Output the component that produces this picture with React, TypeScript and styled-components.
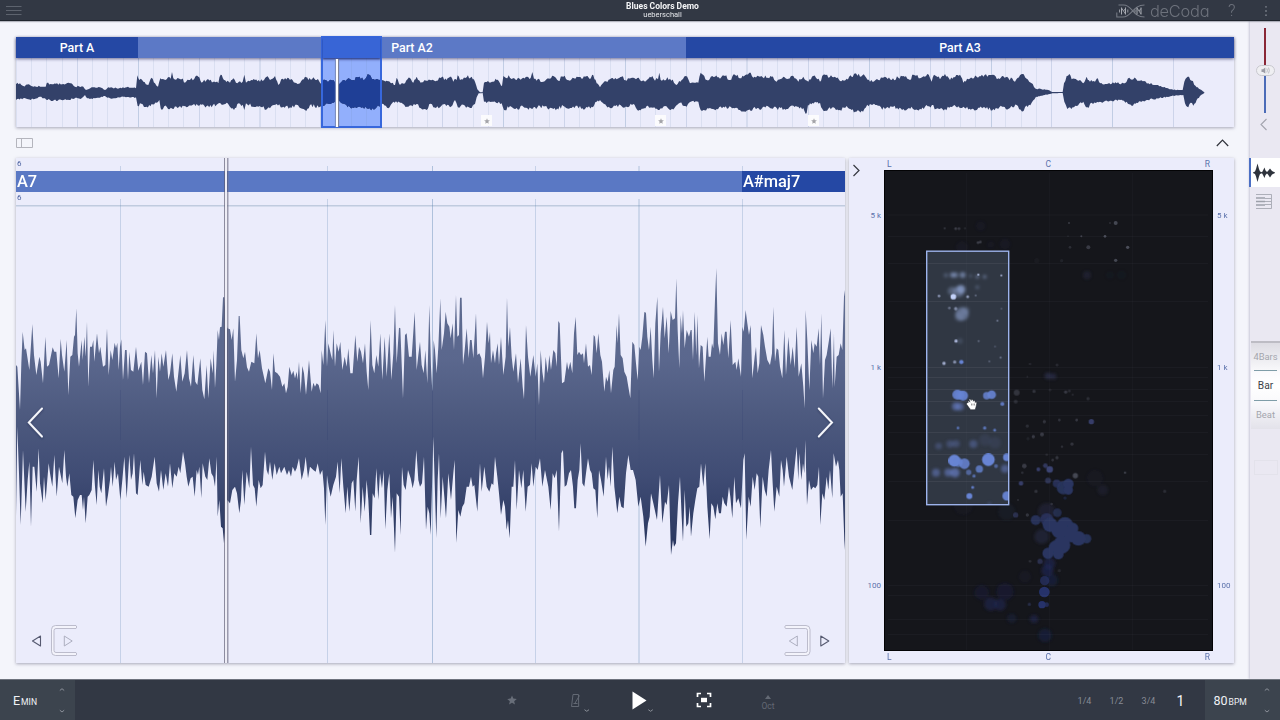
import React from 'react';
import styled, { createGlobalStyle } from 'styled-components';

const GlobalStyle = createGlobalStyle`
  *, *::before, *::after { box-sizing: border-box; }
  html, body { margin: 0; padding: 0; overflow: hidden; }
  body { font-family: Roboto, "Liberation Sans", sans-serif; background: #f4f5fb; }
  svg { display: block; }
`;

type Pair = [number, number];

/* Envelopes are flat x,y lists in thirds of a pixel. */
const pairs = (s: string, dx = 0): Pair[] =>
  s.trim().split(/\s+/).map((p) => {
    const [x, y] = p.split(',').map(Number);
    return [x + dx, y] as Pair;
  });

const mainTop: Pair[] = [
  ...pairs(`48,375 52,380 60,510 64,370 68,275 74,330 78,325 88,390 97,252 102,345 109,405 118,350 122,365 129,430 136,290 141,380 147,375 158,322 163,335 169,335 176,415 182,296 186,345 193,395 200,300 205,465 211,350 217,345 222,290 225,285 229,205 233,340 237,380 245,300 248,360 253,290 257,350 261,245 265,440 270,320 276,320 280,300 283,365 291,280 297,340 301,320 309,380 316,375 321,265 326,405 332,330 337,360 344,308 348,325 352,308 356,390 360,320 364,298 369,420 375,330 380,330 384,420 388,335 393,390 400,395 408,320 415,392 424,365 429,435 435,335 441,340 447,430 454,345 459,400 465,330 470,475 475,350 480,395 485,340 490,380 498,330 505,420 510,400 517,340 522,410 529,455 541,345 547,425 554,400 561,330 567,415 573,440 580,345 586,425 592,435 601,355 607,450 613,478 620,375 625,475 632,355 638,400 641,330 645,445 649,375 653,270 657,300 660,262 665,260 669,172 673,172 677,230 682,265 690,268 695,300 700,265 705,425 711,360 716,228 719,228 724,330 730,355 735,335 741,382 747,395 754,365 763,370 769,280 774,355 779,330 786,385 796,430 805,385 810,395 816,450 820,340 825,395 832,400 840,410 847,440 853,430 858,460 863,440 868,380 875,405 880,392 885,415 890,395 893,420 897,365 902,460 907,378 912,400 918,465 927,360 935,455 940,428 945,440 950,430 956,435 962,460 965,330 970,375 976,240 981,380 985,310 993,345 997,360 1000,270 1005,380 1010,310 1016,335 1021,305 1027,390 1034,350 1040,380 1045,325 1051,400 1058,400 1066,285 1072,365 1077,320 1083,335 1089,370 1095,310 1100,395 1105,450 1112,240 1117,375 1123,400 1129,345 1135,380 1141,280 1147,420 1154,290 1160,410 1168,280 1174,420 1180,340 1185,195 1190,370 1197,263 1201,265 1209,475 1215,285 1220,280 1227,350 1235,350 1244,215 1250,390 1255,345 1260,305 1265,375 1271,400 1276,330 1282,430`),
  ...pairs(`28,195 33,380 37,455 41,300 45,330 50,400 55,320 61,175 65,330 72,280 77,215 82,250 88,260 92,295 98,250 102,330 108,165 112,290 117,285 120,173 125,173 129,375 134,330 140,265 146,355 150,300 155,300 160,355 168,220 172,345 178,340 184,355 189,415 195,350 201,245 206,310 210,275 213,370 219,330 225,370 228,340 233,310 237,375 243,290 250,405 257,350 261,172 265,320 270,260 275,350 280,395 288,340 294,430 302,355 308,440 312,478 318,255 324,350 331,410 340,345 347,410 352,370 357,495 362,330 367,395 372,430 377,350 383,400 388,345 393,390 400,330 406,340 410,380 415,243 419,250 426,430 433,425 441,365 445,390 451,365 457,400 462,280 467,230 472,345 477,335 483,345 489,340 492,370 498,310 504,380 510,375 515,405 521,285 525,290 530,340 535,280 541,345 546,365 553,455 558,410 563,425 568,390 573,460 580,390 584,380 590,255 593,310 597,220 602,345 608,355 613,395 620,410 625,440 631,475 637,305 643,315 648,370 653,420 658,320 662,330 667,290 673,216 678,218 682,290 687,330 692,260 697,360 701,415 706,250 712,170 717,395 722,280 729,200 734,295 740,230 746,340 752,213 758,240 765,235 769,115 773,270 778,385 782,225 786,280 789,210 794,325 800,270 807,290 812,270 815,270 819,360 824,215 829,345 832,225 837,385 842,315 848,320 853,425 862,290 866,350 872,350 876,310 880,325 885,180 889,84 894,310 900,345 905,280 910,315 915,275 920,275 925,355 932,240 938,375 946,365 950,390 955,355 963,410 967,260 971,275 977,210 982,250 987,285 992,255 997,415 1004,350 1008,320 1013,400 1018,370 1023,255 1030,285 1035,320 1042,360 1050,375 1056,340 1060,200 1065,365 1070,325 1075,330 1080,380 1087,415 1093,270 1098,405 1105,290 1112,375 1118,320 1124,385 1130,260 1136,410 1144,370 1150,440 1154,505 1157,210 1162,300 1168,450 1174,300 1180,340 1184,310 1190,320 1196,265 1200,375 1204,220 1209,475 1215,360 1220,345 1227,300 1232,265 1237,445 1242,280 1244,440 1250,350 1256,345 1262,310 1267,330 1272,170 1275,150`, 1260),
];

const mainBottom: Pair[] = [
  ...pairs(`48,830 52,560 57,700 62,855 69,630 77,815 83,720 88,665 93,860 98,680 103,680 110,755 116,625 120,730 128,790 132,710 137,780 146,670 150,700 157,740 163,645 170,770 177,680 187,730 193,630 198,710 202,740 208,700 214,765 220,770 226,835 233,780 240,765 245,765 249,810 252,770 257,850 263,770 268,765 275,750 280,660 285,740 290,795 295,690 299,740 304,760 312,685 318,800 324,765 330,720 333,680 338,740 344,665 348,720 354,700 361,780 367,720 373,650 380,775 388,645 393,720 398,700 402,640 408,760 413,765 421,660 427,735 431,695 437,735 446,740 455,710 464,650 470,730 477,755 483,690 490,750 497,700 504,740 510,670 517,745 523,700 530,710 536,680 541,700 549,635 555,670 560,710 565,740 572,715 578,710 584,770 590,690 594,705 598,680 604,775 608,670 616,710 622,720 628,655 634,700 640,710 645,740 650,650 653,830 658,780 663,860 668,865 672,910 677,850 682,780 690,790 697,750 705,740 711,760 718,820 723,780 727,690 733,795 740,695 748,745 753,620 759,735 764,745 769,800 776,720 782,745 788,735 795,635 800,690 805,705 810,665 817,720 824,670 830,705 838,680 843,700 853,680 861,705 867,690 873,710 878,680 885,695 890,685 897,655 905,720 912,690 917,650 924,715 930,680 940,690 947,695 953,670 960,705 967,690 972,745 976,855 981,705 986,740 992,770 1000,735 1008,710 1013,665 1019,760 1024,655 1030,740 1037,820 1042,740 1048,815 1055,730 1060,720 1066,815 1070,720 1076,650 1082,850 1088,740 1094,815 1100,720 1105,780 1110,885 1114,885 1118,760 1124,775 1129,685 1135,780 1140,700 1146,745 1151,690 1156,868 1162,750 1168,700 1173,835 1178,770 1185,938 1190,760 1197,770 1202,885 1206,680 1211,735 1217,750 1224,690 1232,715 1238,745 1243,720 1249,630 1255,720 1260,740 1266,730 1272,650 1278,870 1283,800 1288,820`),
  ...pairs(`32,885 36,740 40,590 45,760 49,895 53,720 57,640 62,835 68,710 73,770 78,835 85,700 93,780 100,700 104,660 109,908 115,810 121,830 127,800 133,790 140,740 147,740 153,710 158,740 163,735 172,815 180,670 185,755 193,680 200,740 208,755 215,730 220,735 225,650 232,710 237,760 243,825 250,780 255,800 260,870 264,840 269,895 275,740 280,740 285,660 290,810 297,690 304,745 310,690 317,815 323,740 330,735 335,670 340,740 347,680 353,690 360,655 367,740 375,690 385,740 392,810 398,700 404,715 410,690 417,875 424,640 429,630 434,740 440,735 447,700 453,690 459,740 463,805 468,805 473,720 478,690 482,610 487,730 493,740 498,700 504,655 510,690 515,700 520,745 526,750 532,835 537,690 543,720 551,770 558,650 563,720 567,680 572,740 577,620 583,740 592,820 598,770 604,800 611,805 618,700 625,645 632,690 639,690 647,720 655,800 662,770 670,830 677,920 684,850 689,830 693,760 700,790 711,840 720,705 727,850 735,785 740,795 747,735 753,945 759,900 762,920 768,910 774,790 780,710 785,830 789,905 794,750 799,860 805,850 809,800 813,890 820,820 826,780 832,745 838,740 843,670 850,740 856,670 862,800 869,898 874,790 880,800 886,838 892,790 897,820 903,820 908,770 913,790 920,800 927,740 931,770 937,835 943,710 948,790 955,775 963,805 970,660 974,640 979,900 986,770 992,800 998,710 1004,750 1010,700 1015,710 1021,865 1028,710 1034,750 1040,770 1046,690 1053,630 1058,730 1063,815 1070,740 1078,770 1083,660 1088,690 1092,740 1100,650 1107,710 1117,750 1123,690 1130,620 1135,720 1138,640 1144,720 1149,670 1153,700 1156,600 1161,795 1167,720 1173,750 1180,740 1186,745 1192,735 1197,680 1201,855 1207,760 1213,780 1220,710 1225,750 1230,690 1237,775 1241,640 1248,680 1254,660 1258,690 1262,770 1268,760 1273,900 1275,930`, 1260),
];

const overTop: Pair[] = [
  ...pairs(`48,253 60,250 70,258 90,255 100,260 137,260 140,250 160,253 190,252 210,250 225,260 250,260 258,270 275,262 300,262 315,270 325,262 350,265 380,262 408,265 412,226 418,240 430,245 445,255 455,233 465,250 474,260 481,235 500,238 512,236 516,216 520,235 545,238 555,248 570,240 595,230 605,248 620,240 640,245 655,250 662,224 672,240 690,248 700,235 712,250 728,245 733,224 738,248 765,240 780,245 800,230 810,240 825,228 835,255 848,236 870,240 885,248 900,250 915,230 925,240 940,232 950,240 965,250 975,240 985,245 1000,240 1010,262 1020,250 1045,235 1060,240 1075,232 1090,240 1100,230 1110,225 1116,238 1125,240 1145,240 1160,242 1175,250 1185,255 1190,233 1200,255 1215,250 1230,234 1240,248 1250,230 1262,248 1280,242`),
  ...pairs(`30,240 50,242 65,232 80,240 90,230 100,245 110,240 113,226 120,240 140,232 155,230 165,245 172,268 180,277 188,277 192,248 220,245 230,240 240,250 246,258 250,228 270,233 290,240 310,233 332,234 337,216 342,236 370,245 390,236 400,228 415,242 430,230 450,242 470,230 485,236 495,230 510,238 520,226 530,250 540,262 550,248 570,238 590,238 605,230 620,242 640,233 660,240 675,245 697,228 705,242 714,238 718,218 722,240 750,236 770,255 785,240 797,228 810,250 835,248 842,218 860,240 885,230 900,236 915,228 930,240 945,224 960,235 975,226 988,218 1000,233 1020,230 1040,234 1055,230 1070,245 1090,230 1105,236 1120,228 1135,245 1150,230 1165,245 1180,228 1200,245 1210,224 1225,233 1245,230 1260,243 1280,236`, 1260),
  ...pairs(`5,230 15,220 30,230 45,228 60,245 85,240 105,230 125,240 145,233 160,228 180,240 190,224 210,235 232,222 245,245 252,224 270,238 285,222 300,240 330,224 340,248 355,238 380,230 400,230 420,225 445,235 475,234 495,245 510,226 517,222 530,236 545,250 555,265 575,268 595,270 607,276 638,276 642,250 650,228 658,222 665,238 690,240 700,250 710,230 720,245 735,245 740,236 750,250 770,252 800,250 825,250 838,233 850,238 870,242 895,250 920,255 940,262 970,270 998,270 1003,245 1013,230 1025,242 1040,262 1050,268 1063,277`, 2550),
];

const overBottom: Pair[] = [
  ...pairs(`48,300 70,295 100,298 120,290 150,300 200,300 230,293 245,295 255,285 262,295 300,293 315,288 330,295 370,290 408,292 413,318 420,310 440,320 455,312 470,308 478,300 482,325 500,320 517,326 540,318 560,322 590,312 620,318 650,314 680,308 702,330 712,312 728,314 733,330 738,310 775,320 810,325 830,312 850,320 870,322 890,314 915,330 930,315 960,320 980,310 1005,305 1012,290 1020,305 1050,322 1080,320 1105,326 1130,322 1150,312 1165,325 1180,305 1200,308 1225,320 1250,312 1275,327`),
  ...pairs(`20,330 28,312 60,322 75,312 90,322 105,300 113,320 130,314 155,324 165,312 170,292 176,280 188,279 192,305 220,305 245,310 252,330 270,318 290,324 310,320 337,327 360,318 390,323 400,327 430,318 455,324 480,318 495,327 515,320 530,305 540,300 552,312 570,324 590,315 620,320 640,312 658,330 680,318 718,330 735,318 752,330 780,308 800,320 812,305 835,305 842,330 870,324 890,327 910,320 940,324 960,330 985,330 1000,324 1020,330 1040,317 1070,324 1100,327 1120,317 1150,324 1160,340 1164,315 1170,310 1185,305 1200,308 1210,332 1240,322 1260,330 1280,318`, 1260),
  ...pairs(`5,330 15,335 35,332 60,312 80,315 105,327 130,320 160,327 185,320 195,330 225,320 250,315 258,327 285,327 310,317 340,320 370,327 400,322 430,327 460,320 480,324 500,315 515,334 525,322 545,308 558,290 580,286 607,280 638,279 643,305 652,327 660,322 680,318 700,305 712,322 725,308 750,305 780,302 810,300 830,305 845,317 860,308 890,300 920,295 950,290 980,286 1000,285 1005,310 1015,322 1022,308 1030,317 1040,300 1050,288 1063,279`, 2550),
];

/* Fills in fine peaks between the envelope's control points. */
const roughen = (pts: Pair[], dir: number): Pair[] => {
  const out: Pair[] = [];
  let seed = 17 + dir;
  for (let i = 0; i < pts.length - 1; i++) {
    const [x0, y0] = pts[i];
    const [x1, y1] = pts[i + 1];
    const n = Math.max(1, Math.round((x1 - x0) / 4));
    for (let k = 0; k < n; k++) {
      const t = k / n;
      const y = y0 + (y1 - y0) * t;
      seed = (seed * 1103515245 + 12345) % 2147483648;
      const amp = Math.min(11, Math.abs(y - 278) * 0.26);
      out.push([x0 + (x1 - x0) * t, k === 0 ? y : y + dir * (seed / 2147483648 - 0.4) * amp]);
    }
  }
  out.push(pts[pts.length - 1]);
  return out;
};

const toPath = (top: Pair[], bottom: Pair[]) =>
  'M' + top.map((p) => p.join(' ')).join('L') + 'L' + [...bottom].reverse().map((p) => p.join(' ')).join('L') + 'Z';

const MAIN_WAVE = toPath(mainTop, mainBottom);
const OVER_WAVE = toPath(roughen(overTop, -1), roughen(overBottom, 1));

/* ---------- frame ---------- */
const Frame = styled.div`
  width: 1280px;
  height: 720px;
  display: flex;
  flex-direction: column;
  overflow: hidden;
  background: #f4f5fb;
`;

const Header = styled.header`
  height: 21px;
  flex: none;
  display: grid;
  grid-template-columns: 562.5px 200px 1fr;
  background: #323844;
  border-bottom: 1px solid #20252d;
  box-shadow: 0 1px 1px rgba(60, 66, 80, 0.35);
  z-index: 1;
`;

const MenuSlot = styled.div`
  padding: 6px 0 0 6px;
`;

const Titles = styled.div`
  text-align: center;
  color: #f4f5f7;
  padding-top: 2px;
`;

const SongTitle = styled.div`
  font-size: 8.5px;
  font-weight: 700;
  line-height: 9px;
`;

const Artist = styled.div`
  font-size: 7.5px;
  line-height: 8px;
  color: #e4e6ea;
`;

const Brand = styled.div`
  display: flex;
  align-items: center;
  padding-left: 353.5px;
  color: #6d727c;
`;

const BrandName = styled.span`
  width: 60px;
  margin-left: 4px;
  font-family: Inter, sans-serif;
  font-size: 16.4px;
  font-weight: 300;
  line-height: 20px;
  letter-spacing: -0.25px;
  font-feature-settings: "cv11";
`;

const Help = styled.span`
  width: 10px;
  margin: 1px 0 0 18px;
  font-size: 16.5px;
  font-weight: 300;
  line-height: 20px;
`;

const MoreDots = styled.svg`
  margin-left: 26px;
`;

const Body = styled.div`
  flex: 1;
  display: flex;
  min-height: 0;
`;

const Content = styled.main`
  width: 1250px;
  padding: 16px 16px 15px 16px;
  display: flex;
  flex-direction: column;
`;

/* ---------- overview ---------- */
const Overview = styled.section`
  position: relative;
  width: 1218px;
  height: 90px;
  flex: none;
  background: #ebecfb;
  box-shadow: 0 1px 3px rgba(90, 90, 120, 0.5);
`;

const PartRow = styled.div`
  position: relative;
  display: flex;
  height: 21px;
  box-shadow: 0 1px 3px rgba(40, 40, 90, 0.65);
`;

const Part = styled.div<{ $w: number; $dark?: boolean }>`
  width: ${(p) => p.$w}px;
  background: ${(p) => (p.$dark ? '#2548a4' : '#5c79c6')};
  color: #fff;
  font-size: 12.4px;
  font-weight: 500;
  line-height: 21px;
  text-align: center;
`;

const OverviewWave = styled.svg`
  position: absolute;
  left: 0;
  top: 21px;
  z-index: 0;
`;

const Selection = styled.div`
  position: absolute;
  left: 305px;
  top: -1px;
  width: 61px;
  height: 92px;
  border: 2px solid #3767dc;
`;

const SelectionHead = styled.div`
  height: 20px;
  background: #3865d6;
  box-shadow: 0 1px 2px rgba(20, 40, 120, 0.7);
`;

const OverviewPlayhead = styled.div`
  position: absolute;
  left: 320px;
  top: 22px;
  width: 2px;
  height: 68px;
  background: #fff;
  box-shadow: 1px 0 1px #7d7f8f, -1px 0 1px #7d8cb8;
`;

const Marker = styled.div<{ $x: number }>`
  position: absolute;
  left: ${(p) => p.$x}px;
  top: 78px;
  width: 11px;
  height: 11px;
  background: #fbfbfd;
  display: flex;
  align-items: center;
  justify-content: center;
`;

const Tools = styled.div`
  height: 31px;
  flex: none;
  display: flex;
  align-items: center;
  justify-content: space-between;
  padding: 1px 5px 0 0;
`;

/* ---------- detail ---------- */
const Panels = styled.div`
  display: flex;
  gap: 4px;
  height: 505px;
`;

const Track = styled.section`
  position: relative;
  width: 829px;
  background: #ebecfb;
  box-shadow: 0 1px 3px rgba(90, 90, 120, 0.5);
  display: flex;
  flex-direction: column;
`;

const Ruler = styled.div`
  height: 13px;
  padding-left: 1px;
  font-size: 8px;
  line-height: 12px;
  color: #4b62a0;
`;

const ChordRow = styled.div`
  display: flex;
  height: 21px;
  flex: none;
`;

const Chord = styled.div<{ $w: number; $dark?: boolean }>`
  width: ${(p) => p.$w}px;
  padding-left: 1px;
  background: ${(p) => (p.$dark ? '#2548a4' : '#5a78c4')};
  color: #fff;
  font-size: 16.4px;
  font-weight: 500;
  line-height: 22px;
`;

const TrackOverlay = styled.svg`
  position: absolute;
  left: 0;
  top: 0;
`;

const Playhead = styled.div`
  position: absolute;
  left: 208px;
  top: 0;
  width: 5px;
  height: 505px;
  background: linear-gradient(90deg, rgba(90, 88, 110, 0.65) 0 1px, #eeedf6 1px 3px, rgba(90, 88, 110, 0.55) 3px 4px, rgba(120, 118, 140, 0.35) 4px 5px);
`;

const Spectral = styled.section`
  width: 385px;
  background: #ebecfb;
  box-shadow: 0 1px 3px rgba(90, 90, 120, 0.5);
  display: grid;
  grid-template-columns: 35px 329px 21px;
  grid-template-rows: 12px 481px 12px;
`;

const PanAxis = styled.div`
  display: flex;
  justify-content: space-between;
  padding: 0 3px;
  font-size: 8.5px;
  line-height: 12px;
  color: #5b71ab;
`;

const FreqAxis = styled.div<{ $right?: boolean }>`
  display: flex;
  flex-direction: column;
  padding-top: 39.5px;
  font-size: 8px;
  line-height: 12px;
  color: #5b71ab;
  text-align: ${(p) => (p.$right ? 'left' : 'right')};
  padding-left: ${(p) => (p.$right ? 4 : 0)}px;
  padding-right: ${(p) => (p.$right ? 0 : 3)}px;
  white-space: nowrap;
`;

const Freq = styled.span<{ $gap?: number }>`
  margin-top: ${(p) => p.$gap ?? 0}px;
`;

const Collapse = styled.div`
  padding: 6px 0 0 3px;
  height: 0;
`;

/* ---------- rail ---------- */
const Rail = styled.aside`
  width: 30px;
  background: #eae8f2;
  box-shadow: -1px 0 2px rgba(120, 115, 150, 0.35);
  display: flex;
  flex-direction: column;
  align-items: center;
`;

const Volume = styled.div`
  width: 30px;
  height: 137px;
  flex: none;
`;

const RailTab = styled.div<{ $active?: boolean }>`
  width: 31px;
  height: 29px;
  flex: none;
  margin-left: -1px;
  padding-right: 3px;
  display: flex;
  align-items: center;
  justify-content: center;
  background: ${(p) => (p.$active ? '#fff' : 'transparent')};
  border-left: 2px solid ${(p) => (p.$active ? '#4b6fc4' : 'transparent')};
`;

const ScaleWheel = styled.div`
  width: 29px;
  height: 88px;
  margin: 125px 0 0 1px;
  flex: none;
  display: flex;
  flex-direction: column;
  align-items: center;
  border-top: 2px solid #bdbcc4;
  background: linear-gradient(#dddce3, #fbfbfd 35%, #fff 50%, #f8f8fb 70%, #e3e2ea);
`;

const ScaleItem = styled.div<{ $on?: boolean }>`
  width: 23px;
  height: ${(p) => (p.$on ? 31 : 27)}px;
  flex: none;
  display: flex;
  align-items: center;
  justify-content: center;
  font-size: ${(p) => (p.$on ? 10.2 : 9.4)}px;
  color: ${(p) => (p.$on ? '#3b3f48' : '#a4a6ad')};
  border-style: solid;
  border-color: #7f9da8;
  border-width: ${(p) => (p.$on ? '1px 0' : '0')};
`;

const Ghost = styled.div`
  width: 24px;
  height: 15px;
  margin: 31px 0 0 2px;
  border: 1px solid #e3e2eb;
`;

/* ---------- footer ---------- */
const Footer = styled.footer`
  height: 41px;
  flex: none;
  display: flex;
  background: #323844;
  border-top: 1px solid #6e737d;
`;

const ValueBox = styled.div`
  width: 75px;
  display: flex;
  justify-content: space-between;
  background: #3c444e;
  padding-right: 10.5px;
`;

const Value = styled.div<{ $x: number }>`
  padding-left: ${(p) => p.$x}px;
  font-size: 12.5px;
  line-height: 42px;
  color: #f0f2f5;
  white-space: nowrap;
`;

const Unit = styled.span`
  font-size: 8.6px;
  margin-left: 1px;
`;

const Transport = styled.div`
  display: flex;
  width: 320px;
  margin-left: 405px;
`;

const Control = styled.div`
  width: 64px;
  display: flex;
  align-items: center;
  justify-content: center;
  color: #636974;
`;

const Octave = styled.div`
  display: flex;
  flex-direction: column;
  align-items: center;
  gap: 2px;
  font-size: 8.5px;
  line-height: 10px;
  padding-top: 5px;
`;

const Speeds = styled.div`
  display: flex;
  margin-left: auto;
  margin-right: 8.5px;
`;

const Speed = styled.div<{ $on?: boolean }>`
  width: 32px;
  text-align: center;
  font-size: ${(p) => (p.$on ? 14 : 9)}px;
  line-height: 42px;
  color: ${(p) => (p.$on ? '#f4f5f8' : '#878c96')};
`;

const StarShape = ({ size, color }: { size: number; color: string }) => (
  <svg width={size} height={size} viewBox="0 0 24 24">
    <path fill={color} d="M12 1l3.2 7.6 8.3.7-6.3 5.4 1.9 8.1L12 18.5l-7.1 4.3 1.9-8.1L.5 9.3l8.3-.7z" />
  </svg>
);

const Steppers = () => (
  <svg width="6" height="40" viewBox="0 0 6 40" fill="none" stroke="#8b9099" strokeWidth="1">
    <path d="M.8 10.5 3 8.7l2.2 1.8M.8 30.2 3 32l2.2-1.8" />
  </svg>
);

const Logo = () => (
  <svg width="30" height="14" viewBox="0 0 30 14" fill="none" stroke="#757a84" strokeWidth="1.1">
    <path d="M.8 8.5v4.500h6C16 13 16.500 1 28.500 1M2.500 1h5C17 1 16 13 28.500 13" />
    <path stroke="#a9adb4" strokeWidth="1" d="M5.500 3.500v7M9.500 3.500v7M21 3.500v7M25 3.500v7" />
    <path stroke="#a0a4ab" strokeWidth=".9" d="M5.500 4l4 6M9.500 4.500 7.500 7M21 4l4 6M25 4.500 23 7M3.500 5.500v3M11.800 5.500v3M19 5.500v3" />
  </svg>
);

const bars = [61.5, 122.5, 183.5, 244, 304.5, 365.5, 426.5, 487.5, 548.5, 609.5, 670.5, 731, 792.5, 853.5, 914.5, 975.5, 1035.5, 1096.5, 1157.5];
const beats = Array.from({ length: 68 }, (_, i) => 0.5 + Math.round(i * 15.22)).filter((_, i) => i % 4 !== 0 || i === 0);

const OverviewGraph = () => (
  <OverviewWave width="1218" height="69" viewBox="16 58 1218 69">
    <defs>
      <clipPath id="sel"><rect x="321" y="58" width="61" height="69" /></clipPath>
    </defs>
    <rect x="321" y="58" width="61" height="69" fill="#92affc" />
    <g stroke="#6b8cb4">
      {beats.map((x) => <line key={x} x1={x + 16} x2={x + 16} y1="58" y2="127" strokeOpacity=".13" />)}
      {bars.map((x, i) => <line key={x} x1={x + 16} x2={x + 16} y1="58" y2="127" strokeOpacity={i % 2 ? 0.32 : 0.24} />)}
    </g>
    <path d={OVER_WAVE} transform="scale(.33333)" fill="#334169" />
    <g clipPath="url(#sel)">
      <path d={OVER_WAVE} transform="scale(.33333)" fill="#1f3f96" />
    </g>
  </OverviewWave>
);

const TrackGraph = () => (
  <TrackOverlay width="829" height="505" viewBox="16 158 829 505">
    <defs>
      <linearGradient id="wave" gradientUnits="userSpaceOnUse" x1="0" x2="0" y1="60" y2="960">
        <stop offset="0" stopColor="#5b698e" />
        <stop offset=".33" stopColor="#56638a" />
        <stop offset=".52" stopColor="#48557b" />
        <stop offset=".72" stopColor="#3a4770" />
        <stop offset="1" stopColor="#1e2c56" />
      </linearGradient>
      <filter id="arrowShadow" x="-50%" y="-50%" width="200%" height="200%">
        <feDropShadow dx="0" dy="1" stdDeviation="0.8" floodColor="#1d2746" floodOpacity=".6" />
      </filter>
    </defs>
    <rect x="16" y="205" width="829" height="1.5" fill="#c0cbdf" />
    {[120.5, 327.5, 432.5, 535.5, 639, 742.5].map((x, i) => (
      <g key={x} stroke="#4f7cab" strokeOpacity={i === 2 ? 0.38 : 0.24} strokeWidth={i === 4 ? 1.6 : 1}>
        <line x1={x} x2={x} y1="166" y2="171" />
        <line x1={x} x2={x} y1="199" y2="663" />
      </g>
    ))}
    <path d={MAIN_WAVE} fill="url(#wave)" fillOpacity=".97" transform="translate(0 240) scale(.33333)" />
    <g stroke="#24356b" strokeOpacity=".14">
      {[120.5, 327.5, 432.5, 535.5, 639, 742.5].map((x) => <line key={x} x1={x} x2={x} y1="390" y2="440" />)}
    </g>
    <g fill="none" stroke="#f6f7fc" strokeWidth="1.9" strokeLinecap="round" filter="url(#arrowShadow)">
      <path d="M42 408.500 28.800 422.500 42 436.500" />
      <path d="M818.800 408.500 832 422.500 818.800 436.500" />
    </g>
    <g fill="none" strokeLinejoin="round">
      <path d="M40.500 636 32.500 641 40.500 646Z" stroke="#565a70" strokeWidth="1.1" />
      <path d="M820.800 636 828.800 641 820.800 646Z" stroke="#565a70" strokeWidth="1.1" />
      <path d="M64.300 636 72.200 641 64.300 646Z" stroke="#adafc0" />
      <path d="M797.300 636 789.300 641 797.300 646Z" stroke="#adafc0" />
      <path d="M76 625.500H55.500a4 4 0 0 0-4 4v22a4 4 0 0 0 4 4H76q1.500-1.500 0-3H56a2 2 0 0 1-2-2v-20a2 2 0 0 1 2-2H76q1.500-1.500 0-3Z" fill="#f3f3fb" stroke="#b5b6c6" strokeWidth=".9" />
      <path d="M785.500 625.500H806a4 4 0 0 1 4 4v22a4 4 0 0 1-4 4H785.500q-1.500-1.500 0-3H805.500a2 2 0 0 0 2-2v-20a2 2 0 0 0-2-2H785.500q-1.500-1.500 0-3Z" fill="#f3f3fb" stroke="#b5b6c6" strokeWidth=".9" />
    </g>
  </TrackOverlay>
);

/* x, y, r, opacity */
type Dot = [number, number, number, number];

const outside: Dot[] = [
  [284, 85, 3, 0.3], [317, 86, 4, 0.35], [327, 86, 4, 0.3], [345, 85, 3, 0.2], [384, 128, 4, 0.35], [391, 126, 4, 0.35],
  [657, 69, 3, 0.3], [780, 69, 3, 0.2], [797, 69, 6, 0.4], [694, 109, 3, 0.35], [765, 109, 4, 0.45], [654, 109, 3, 0.1],
  [660, 142, 4, 0.2], [715, 142, 6, 0.3], [833, 142, 5, 0.45], [797, 181, 5, 0.4], [635, 182, 5, 0.1], [560, 182, 8, 0.05],
  [540, 492, 4, 0.15], [621, 495, 4, 0.2], [532, 530, 2, 0.3], [500, 578, 9, 0.25], [497, 605, 6, 0.2], [552, 574, 5, 0.25],
  [600, 570, 4, 0.15], [647, 576, 5, 0.3], [658, 573, 4, 0.2], [668, 584, 3, 0.2], [714, 596, 5, 0.2],
  [583, 665, 5, 0.25], [628, 660, 4, 0.25], [680, 660, 4, 0.3], [532, 678, 5, 0.2], [550, 710, 5, 0.3],
  [576, 703, 6, 0.3], [534, 716, 5, 0.1], [666, 732, 5, 0.25], [636, 740, 4, 0.2], [590, 764, 4, 0.15], [621, 773, 5, 0.25],
  [608, 780, 4, 0.25], [523, 798, 7, 0.3], [517, 818, 4, 0.2], [825, 818, 3, 0.5], [944, 874, 5, 0.2], [676, 827, 8, 0.4],
  [558, 874, 5, 0.25], [504, 900, 3, 0.2], [532, 945, 5, 0.25], [605, 912, 4, 0.2], [540, 1084, 4, 0.2], [628, 1112, 5, 0.15],
];

const outsideBlue: Dot[] = [
  [724, 665, 8, 0.7], [565, 808, 6, 0.7], [586, 797, 7, 0.6], [599, 808, 10, 0.8], [513, 850, 7, 0.7], [594, 842, 9, 0.5],
  [497, 945, 8, 0.45], [570, 1084, 8, 0.45], [538, 1213, 5, 0.4],
];

const clusters: Dot[] = [
  [620, 850, 12, 0.8], [640, 863, 20, 0.9], [655, 852, 16, 1], [655, 870, 14, 1], [645, 894, 5, 0.5],
  [557, 960, 15, 0.85], [590, 958, 19, 0.8], [622, 938, 13, 0.7], [600, 974, 22, 1], [645, 975, 24, 1], [630, 990, 26, 1], [668, 985, 17, 1],
  [664, 1005, 22, 1], [685, 1015, 22, 1], [710, 1016, 14, 0.9], [635, 1035, 26, 1], [618, 1043, 22, 1], [594, 1060, 17, 1],
  [625, 1062, 16, 1],
];

const softDark: Dot[] = [
  [392, 78, 14, 0.1], [336, 142, 18, 0.1], [422, 134, 10, 0.1], [465, 132, 16, 0.1], [711, 225, 12, 0.25], [780, 225, 12, 0.06], [815, 225, 14, 0.06],
  [594, 528, 10, 0.45], [610, 529, 9, 0.4], [400, 536, 12, 0.06], [758, 870, 16, 0.18], [735, 835, 25, 0.08], [590, 935, 26, 0.25],
  [575, 1010, 22, 0.3], [525, 1130, 18, 0.1], [340, 915, 30, 0.08], [470, 935, 26, 0.12],
];

const softNavy: Dot[] = [
  [598, 1090, 18, 0.55], [592, 1112, 18, 0.6], [605, 1140, 18, 0.4], [395, 1178, 22, 0.25], [465, 1175, 26, 0.28],
  [422, 1212, 20, 0.5], [450, 1214, 18, 0.5], [485, 1255, 14, 0.3], [552, 1257, 13, 0.5], [585, 1306, 20, 0.4],
];

const inside: Dot[] = [
  [175, 104, 3, 1], [244, 106, 3, 0.9], [57, 168, 4, 0.65], [143, 170, 4.5, 0.65], [167, 166, 3, 0.4],
  [88, 204, 4, 0.4], [107, 206, 5, 0.55], [232, 242, 3, 0.5], [244, 206, 3, 0.25], [108, 303, 5, 0.85], [176, 303, 3, 0.4],
  [72, 370, 5, 0.8], [104, 366, 5, 0.6], [208, 364, 2.5, 0.5], [242, 353, 3, 0.5], [225, 320, 3, 0.25],
];

const insideBlue: Dot[] = [
  [124, 366, 6.5, 1], [112, 464, 15, 0.9], [129, 467, 15, 0.9], [120, 465, 14, 0.7], [200, 467, 11, 0.85], [215, 464, 13, 0.9],
  [247, 492, 6, 0.85], [114, 564, 4, 0.8], [194, 564, 5, 0.8], [224, 570, 4.5, 0.8],
  [103, 662, 18, 1], [115, 667, 14, 0.7], [133, 671, 16, 0.85], [205, 659, 19, 1], [260, 652, 11, 1], [178, 687, 11, 0.8], [228, 678, 6, 0.6],
  [146, 697, 8, 0.6], [162, 708, 5, 0.7], [158, 742, 4.5, 0.9], [148, 768, 9, 1], [261, 768, 14, 0.95],
];

const insideSoft: Dot[] = [
  [78, 106, 7, 0.3], [98, 105, 8, 0.6], [107, 105, 8, 0.5], [128, 105, 9, 0.6], [152, 108, 5, 0.3], [172, 110, 6, 0.45], [194, 110, 6, 0.45],
  [96, 153, 13, 0.35], [115, 155, 17, 0.4], [123, 148, 13, 0.75], [172, 142, 6, 0.3], [126, 222, 20, 0.5], [118, 230, 14, 0.25], [136, 212, 12, 0.25],
  [120, 303, 8, 0.2],
];

const insideSoftBlue: Dot[] = [
  [56, 618, 10, 0.3], [90, 612, 11, 0.3], [108, 611, 11, 0.3], [160, 612, 12, 0.38], [195, 600, 18, 0.1], [225, 608, 18, 0.1],
  [48, 698, 12, 0.5], [85, 697, 12, 0.55], [105, 698, 14, 0.65], [255, 686, 12, 0.5], [208, 792, 5, 0.4],
  [108, 499, 12, 0.6], [120, 500, 12, 0.5],
];

const drawDots = (list: Dot[]) => list.map(([x, y, r, o]) => <circle key={`${x}-${y}`} cx={x} cy={y} r={r} opacity={o} />);

const rows = [215, 236.5, 263.5, 301.5, 367.5, 377.5, 389.5, 401.5, 415.5, 432.5, 454.5, 481.5, 520.5, 585.5, 595.5, 619.5, 634.5];

const Spectrum = () => (
  <svg width="329" height="481" viewBox="884 170 329 481">
    <defs>
      <filter id="soft" x="-100%" y="-100%" width="300%" height="300%"><feGaussianBlur stdDeviation="5.5" /></filter>
      <filter id="slight" x="-20%" y="-20%" width="140%" height="140%"><feGaussianBlur stdDeviation="1.3" /></filter>
      <clipPath id="region"><rect x="927" y="251" width="82" height="253.5" /></clipPath>
    </defs>
    <rect x="884" y="170" width="329" height="481" fill="#030305" />
    <rect x="885" y="171" width="327" height="479" fill="#15161b" />
    <g transform="translate(850 200) scale(.33333)">
      <g fill="#3a3f6e" filter="url(#soft)">{drawDots(softDark)}</g>
      <g fill="#1f295c" filter="url(#soft)">{drawDots(softNavy)}</g>
      <g fill="#8c90a4" filter="url(#slight)">{drawDots(outside)}</g>
      <g fill="#46508a" filter="url(#slight)">{drawDots(outsideBlue)}</g>
      <g fill="#2a3661" filter="url(#slight)">{drawDots(clusters)}</g>
      <g fill="#26326a" filter="url(#slight)">
        <circle cx="584" cy="1142" r="14" opacity=".7" /><circle cx="583" cy="1176" r="16" /><circle cx="576" cy="1214" r="11" /><circle cx="590" cy="1214" r="7" opacity=".7" />
      </g>
    </g>
    <rect x="927" y="251.5" width="82" height="253" fill="#303743" />
    <g stroke="#8f98a8" strokeOpacity=".055">
      {rows.map((y) => <line key={y} x1="888" x2="1208" y1={y} y2={y} />)}
      {[966.5, 1049.5, 1132.5].map((x) => <line key={x} x1={x} x2={x} y1="173" y2="650" strokeOpacity=".035" />)}
    </g>
    <g clipPath="url(#region)">
      <g stroke="#9aa5ad" strokeOpacity=".07">
        {rows.map((y) => <line key={y} x1="928" x2="1008" y1={y} y2={y} />)}
      </g>
      <g transform="translate(920 240) scale(.33333)">
        <g fill="#8ea2cf" filter="url(#soft)">{drawDots(insideSoft)}</g>
        <g fill="#6c84d0" filter="url(#soft)">{drawDots(insideSoftBlue)}</g>
        <g fill="#bcc8ee" filter="url(#slight)">{drawDots(inside)}<circle cx="100" cy="170" r="8.5" fill="#c3d2fa" /></g>
        <g fill="#6784d4" filter="url(#slight)">{drawDots(insideBlue)}</g>
      </g>
    </g>
    <rect x="926.7" y="251.2" width="82" height="253.5" fill="none" stroke="#9db3ec" strokeWidth="1.4" />
    <path
      d="M968.300 402.500c-.9-1.300.4-2 1.200-1l.5.700-.8-2.200c-.2-1.100 1.100-1.400 1.600-.3l.4.900c-.1-1.500 1.800-1.600 2-.1l.1.800c.5-1.300 1.900-.9 1.800.3v1c.8-1 1.800-.3 1.600.9l-.6 3c-.2 1.400-.8 2-1 3.200h-4.800c-.3-1.400-1-1.600-1.700-2.600l-1.900-2.700c-.5-.9.700-2.300 1.600-1.900z"
      fill="#fff" stroke="#23262e" strokeWidth=".5"
    />
    <path d="M971.500 403.500v2M973 403.500v2M974.500 403.500v2" stroke="#444" strokeWidth=".5" />
  </svg>
);

export default function App() {
  return (
    <Frame>
      <GlobalStyle />
      <Header>
        <MenuSlot>
          <svg width="16" height="9" viewBox="0 0 16 9" stroke="#5d636e"><path d="M0 .5h15.500M0 4.500h15.500M0 8.500h15.500" /></svg>
        </MenuSlot>
        <Titles>
          <SongTitle>Blues Colors Demo</SongTitle>
          <Artist>ueberschall</Artist>
        </Titles>
        <Brand>
          <Logo />
          <BrandName>deCoda</BrandName>
          <Help>?</Help>
          <MoreDots width="4" height="12" viewBox="0 0 4 12" fill="#777c86">
            <circle cx="2" cy="1.8" r=".9" /><circle cx="2" cy="6" r=".9" /><circle cx="2" cy="10.2" r=".9" />
          </MoreDots>
        </Brand>
      </Header>

      <Body>
        <Content>
          <Overview>
            <OverviewGraph />
            <PartRow>
              <Part $w={122} $dark>Part A</Part>
              <Part $w={548}>Part A2</Part>
              <Part $w={548} $dark>Part A3</Part>
            </PartRow>
            <Selection><SelectionHead /></Selection>
            <OverviewPlayhead />
            {[465, 639, 792].map((x) => (
              <Marker key={x} $x={x}><StarShape size={6} color="#a3a3a8" /></Marker>
            ))}
          </Overview>

          <Tools>
            <svg width="17" height="10" viewBox="0 0 17 10" fill="none" stroke="#b4b5bd"><path d="M.5.5h16v9H.5zM5.500.5v9" /></svg>
            <svg width="13" height="8" viewBox="0 0 13 8" fill="none" stroke="#2f323a" strokeWidth="1.2"><path d="M.8 7 6.500 1.200 12.200 7" /></svg>
          </Tools>

          <Panels>
            <Track>
              <Ruler>6</Ruler>
              <ChordRow>
                <Chord $w={726}>A7</Chord>
                <Chord $w={103} $dark>A#maj7</Chord>
              </ChordRow>
              <Ruler>6</Ruler>
              <TrackGraph />
              <Playhead />
            </Track>
            <Spectral>
              <Collapse>
                <svg width="9" height="13" viewBox="0 0 9 13" fill="none" stroke="#363940" strokeWidth="1.2"><path d="M1.500 1 7 6.500 1.500 12" /></svg>
              </Collapse>
              <PanAxis><span>L</span><span>C</span><span>R</span></PanAxis>
              <span />
              <FreqAxis><Freq>5 k</Freq><Freq $gap={140}>1 k</Freq><Freq $gap={206}>100</Freq></FreqAxis>
              <Spectrum />
              <FreqAxis $right><Freq>5 k</Freq><Freq $gap={140}>1 k</Freq><Freq $gap={206}>100</Freq></FreqAxis>
              <span />
              <PanAxis><span>L</span><span>C</span><span>R</span></PanAxis>
              <span />
            </Spectral>
          </Panels>
        </Content>

        <Rail>
          <Volume>
            <svg width="30" height="137" viewBox="1250 21 30 137" fill="none">
              <path d="M1265 28v42" stroke="#8a2736" strokeWidth="2" />
              <path d="M1265 70v43" stroke="#4c6cb8" strokeWidth="2" />
              <rect x="1256.5" y="65.5" width="18" height="10" rx="5" fill="#efeff2" stroke="#c9c9cf" />
              <path d="M1261.500 69.300h1.500l2.300-1.700v6l-2.300-1.700h-1.500z" fill="#9d9da6" />
              <path d="M1266.800 68.500q1.200 2 0 4M1268.500 67.600q1.700 3 0 5.800" stroke="#b0b0b8" strokeWidth=".8" />
              <path d="M1266.500 119 1261 124.500 1266.500 130" stroke="#a3a4ae" strokeWidth="1.1" />
            </svg>
          </Volume>
          <RailTab $active>
            <svg width="22" height="20" viewBox="0 0 22 20" fill="#2e333c">
              <path d="M0 9.500 2 8.500 3 6 4.500.5 6 6 7 8.500 9 9.300 10 7.500 11.500 4.500 12.500 7.500 14 9 15 8 17 5.500 19 8 22 9.500 22 10 19 11.500 17 14.500 15 11.500 14 10.500 12.500 12 11.500 15 10 12 9 10.200 7 11 6 13.500 4.500 19 3 13.500 2 11 0 10Z" />
            </svg>
          </RailTab>
          <RailTab>
            <svg width="16" height="15" viewBox="0 0 16 15" fill="none" stroke="#9da0aa">
              <path d="M0 .5h15.500v14H0M9 4.500h6M9 7.500h6M9 10.500h6" strokeWidth=".8" />
              <path d="M0 4h9M0 7.500h9M0 11h9" strokeWidth="1.6" />
            </svg>
          </RailTab>
          <ScaleWheel>
            <ScaleItem>4Bars</ScaleItem>
            <ScaleItem $on>Bar</ScaleItem>
            <ScaleItem>Beat</ScaleItem>
          </ScaleWheel>
          <Ghost />
        </Rail>
      </Body>

      <Footer>
        <ValueBox>
          <Value $x={13}>E<Unit>MIN</Unit></Value>
          <Steppers />
        </ValueBox>
        <Transport>
          <Control><StarShape size={10} color="#686e79" /></Control>
          <Control>
            <svg width="34" height="24" viewBox="559 688 34 24" fill="none" stroke="#636974">
              <path d="M573 694.500h5.500l.2 12h-7.200zM574.500 704l5-8.500M573.500 703.500h4" />
              <path d="M584.500 709.700 586.800 711.300 589 709.700" stroke="#8b9099" />
            </svg>
          </Control>
          <Control>
            <svg width="34" height="24" viewBox="623 688 34 24" fill="none">
              <path d="M632.500 691.500 646.500 700.500 632.500 709.500Z" fill="#fff" />
              <path d="M648.300 709.700 650.600 711.300 652.800 709.700" stroke="#8b9099" />
            </svg>
          </Control>
          <Control>
            <svg width="16" height="16" viewBox="0 0 16 16">
              <path d="M1.500 5V1.500H5M11 1.500h3.500V5M14.500 11v3.500H11M5 14.500H1.500V11" fill="none" stroke="#fff" strokeWidth="1.7" />
              <rect x="5" y="5.8" width="6" height="4.4" fill="#fff" />
            </svg>
          </Control>
          <Control>
            <Octave>
              <svg width="6" height="4" viewBox="0 0 6 4"><path d="M3 0 6 4H0z" fill="#636974" /></svg>
              Oct
            </Octave>
          </Control>
        </Transport>
        <Speeds>
          <Speed>1/4</Speed>
          <Speed>1/2</Speed>
          <Speed>3/4</Speed>
          <Speed $on>1</Speed>
        </Speeds>
        <ValueBox>
          <Value $x={8.5}>80<Unit>BPM</Unit></Value>
          <Steppers />
        </ValueBox>
      </Footer>
    </Frame>
  );
}
